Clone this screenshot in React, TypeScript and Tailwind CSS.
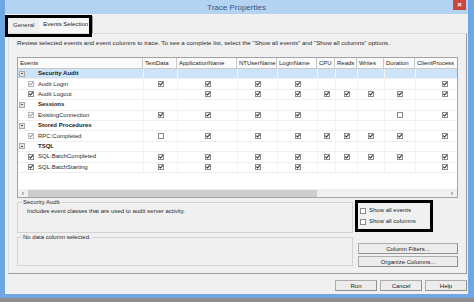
import React from "react";

type Cell = 0 | 1 | 2; // 0 = nothing, 1 = checked, 2 = empty box

const COLS = [
  { name: "TextData", w: 34 },
  { name: "ApplicationName", w: 60 },
  { name: "NTUserName", w: 40 },
  { name: "LoginName", w: 40 },
  { name: "CPU", w: 18 },
  { name: "Reads", w: 22 },
  { name: "Writes", w: 27 },
  { name: "Duration", w: 31 },
  { name: "ClientProcess", w: 58 },
];

type Row =
  | { kind: "cat"; name: string; selected?: boolean }
  | { kind: "ev"; name: string; gray?: boolean; cells: Cell[] };

const ROWS: Row[] = [
  { kind: "cat", name: "Security Audit", selected: true },
  { kind: "ev", name: "Audit Login", gray: true, cells: [1, 1, 1, 1, 0, 0, 0, 0, 1] },
  { kind: "ev", name: "Audit Logout", cells: [0, 1, 1, 1, 1, 1, 1, 1, 1] },
  { kind: "cat", name: "Sessions" },
  { kind: "ev", name: "ExistingConnection", gray: true, cells: [1, 1, 1, 1, 0, 0, 0, 2, 1] },
  { kind: "cat", name: "Stored Procedures" },
  { kind: "ev", name: "RPC:Completed", gray: true, cells: [2, 1, 1, 1, 1, 1, 1, 1, 1] },
  { kind: "cat", name: "TSQL" },
  { kind: "ev", name: "SQL:BatchCompleted", cells: [1, 1, 1, 1, 1, 1, 1, 1, 1] },
  { kind: "ev", name: "SQL:BatchStarting", cells: [1, 1, 1, 1, 0, 0, 0, 0, 1] },
];

function Box({ checked, gray }: { checked?: boolean; gray?: boolean }) {
  return (
    <svg width="6" height="6" viewBox="0 0 6 6" className="shrink-0">
      <rect x="0.5" y="0.5" width="5" height="5" fill="#fff" stroke={gray ? "#b8b8b8" : "#8c8c8c"} />
      {checked && (
        <path
          d="M1.3 2.7 L2.5 4 L4.8 1.4"
          fill="none"
          stroke={gray ? "#9c9c9c" : "#2a2a2a"}
          strokeWidth="1.1"
        />
      )}
    </svg>
  );
}

function Btn({ label, w }: { label: string; w: string }) {
  return (
    <div
      className={`${w} h-[11px] flex items-center justify-center bg-[#ececec] border border-[#adadad] border-r-[#8f8f8f] border-b-[#8f8f8f] text-[6px] leading-none text-[#222]`}
    >
      {label}
    </div>
  );
}

export default function App() {
  return (
    <div
      className="w-[474px] h-[302px] bg-[#8d8d8d] flex flex-col overflow-hidden text-[#1f1f1f]"
      style={{ fontFamily: '"Liberation Sans", Arial, sans-serif' }}
    >
      {/* Window frame */}
      <div className="h-[298px] bg-[#6ea7e4] flex flex-col pl-[5px] pr-[6px] pb-[4px]">
        {/* Title bar */}
        <div className="h-[14px] shrink-0 bg-[#b4d3f2] grid grid-cols-[1fr_auto_1fr]">
          <div />
          <div className="pt-[3px] text-[8px] leading-[9px] text-[#34557e]">Trace Properties</div>
          <div className="flex justify-end pr-[2px]">
            <div className="w-[13px] h-[10px] bg-[#c9473d] flex items-center justify-center text-white text-[8px] leading-none font-bold">
              ×
            </div>
          </div>
        </div>

        {/* Client area */}
        <div className="flex-1 bg-[#f0f0f0] flex flex-col">
          {/* Tabs */}
          <div className="relative h-[19px] shrink-0 flex items-end pl-[3px]">
            <div className="h-[15px] px-[5px] flex items-center text-[6px] text-[#333]">General</div>
            <div className="h-[17px] px-[4px] flex items-center text-[6px] text-[#222] bg-[#f7f7f7] border-r border-[#9a9a9a]">
              Events Selection
            </div>
            {/* annotation box */}
            <div className="absolute left-0 top-[1px] w-[87px] h-[22px] border-[3px] border-black" />
          </div>

          {/* Tab page */}
          <div className="ml-[3px] mr-[1px] h-[241px] shrink-0 border border-[#dadada] border-r-[#9c9c9c] border-b-[#9c9c9c] flex flex-col pl-[8px] pr-[8px] pt-[5px]">
            <div className="text-[6.2px] leading-[8px] text-[#2a2a2a] whitespace-nowrap">
              Review selected events and event columns to trace. To see a complete list, select the "Show all events" and "Show all columns" options.
            </div>

            {/* Grid */}
            <div className="mt-[10px] w-[441px] h-[141px] bg-white border border-[#a3a3a3] flex flex-col overflow-hidden">
              {/* header */}
              <div className="flex h-[11px] shrink-0">
                <div className="w-[125px] shrink-0 bg-[#fafafa] border-r border-b border-[#c9c9c9] flex items-center pl-[2px] text-[6px]">
                  Events
                </div>
                {COLS.map((c) => (
                  <div
                    key={c.name}
                    className="shrink-0 bg-[#fafafa] border-r border-b border-[#c9c9c9] flex items-center pl-[2px] text-[6px] whitespace-nowrap overflow-hidden"
                    style={{ width: c.w }}
                  >
                    {c.name}
                  </div>
                ))}
              </div>

              {/* rows */}
              {ROWS.map((r) => (
                <div
                  key={r.name}
                  className={`flex h-[10.4px] shrink-0 border-b border-[#efefef] ${
                    r.kind === "cat" && r.selected ? "bg-[#cde4f8]" : ""
                  }`}
                >
                  <div className="w-[125px] shrink-0 flex items-center">
                    {r.kind === "cat" ? (
                      <>
                        <div className="ml-[1px] w-[6px] h-[6px] bg-[#e4e4e4] border border-[#a9a9a9] flex items-center justify-center">
                          <div className="w-[2px] h-px bg-[#555]" />
                        </div>
                        <span className="ml-[13px] text-[6px] font-bold text-[#1a1a1a]">{r.name}</span>
                      </>
                    ) : (
                      <>
                        <div className="ml-[10px]">
                          <Box checked gray={r.gray} />
                        </div>
                        <span className="ml-[4px] text-[6px] text-[#2a2a2a]">{r.name}</span>
                      </>
                    )}
                  </div>
                  {COLS.map((c, i) => (
                    <div
                      key={c.name}
                      className="shrink-0 flex items-center justify-center border-l border-[#f3f3f3]"
                      style={{ width: c.w }}
                    >
                      {r.kind === "ev" && r.cells[i] !== 0 && <Box checked={r.cells[i] === 1} />}
                    </div>
                  ))}
                </div>
              ))}

              <div className="flex-1" />

              {/* horizontal scrollbar */}
              <div className="h-[8px] shrink-0 bg-[#f0f0f0] flex items-center">
                <div className="w-[10px] text-[7px] leading-none text-[#555] flex justify-center">‹</div>
                <div className="w-[289px] h-[7px] bg-[#cdcdcd]" />
                <div className="flex-1" />
                <div className="w-[10px] text-[7px] leading-none text-[#555] flex justify-center">›</div>
              </div>
            </div>

            {/* bottom section */}
            <div className="mt-[1px] flex gap-[2px]">
              <div className="w-[336px] flex flex-col">
                <fieldset className="h-[34px] border border-[#d3d3d3] pl-[9px]">
                  <legend className="-ml-[5px] px-[1px] text-[6px] leading-[7px] text-[#2a2a2a]">Security Audit</legend>
                  <div className="text-[6px] leading-[8px] text-[#2a2a2a] pt-[1px]">
                    Includes event classes that are used to audit server activity.
                  </div>
                </fieldset>
                <fieldset className="mt-[1px] h-[32px] border border-[#d3d3d3] pl-[9px]">
                  <legend className="-ml-[5px] px-[1px] text-[6px] leading-[7px] text-[#2a2a2a]">No data column selected.</legend>
                </fieldset>
              </div>

              <div className="w-[103px] flex flex-col">
                <div className="mt-[1px] w-[78px] h-[32px] border-[3px] border-black flex flex-col justify-center gap-[4px] pl-[2px]">
                  <div className="flex items-center gap-[3px] text-[6px] leading-[7px]">
                    <Box />
                    <span>Show all events</span>
                  </div>
                  <div className="flex items-center gap-[3px] text-[6px] leading-[7px]">
                    <Box />
                    <span>Show all columns</span>
                  </div>
                </div>
                <div className="mt-[11px] flex flex-col gap-[2px] items-end">
                  <Btn label="Column Filters..." w="w-[100px]" />
                  <Btn label="Organize Columns..." w="w-[100px]" />
                </div>
              </div>
            </div>
          </div>

          {/* dialog buttons */}
          <div className="mt-[6px] flex justify-end gap-[3px] pr-[1px]">
            <Btn label="Run" w="w-[42px]" />
            <Btn label="Cancel" w="w-[42px]" />
            <Btn label="Help" w="w-[42px]" />
          </div>
        </div>
      </div>
    </div>
  );
}
